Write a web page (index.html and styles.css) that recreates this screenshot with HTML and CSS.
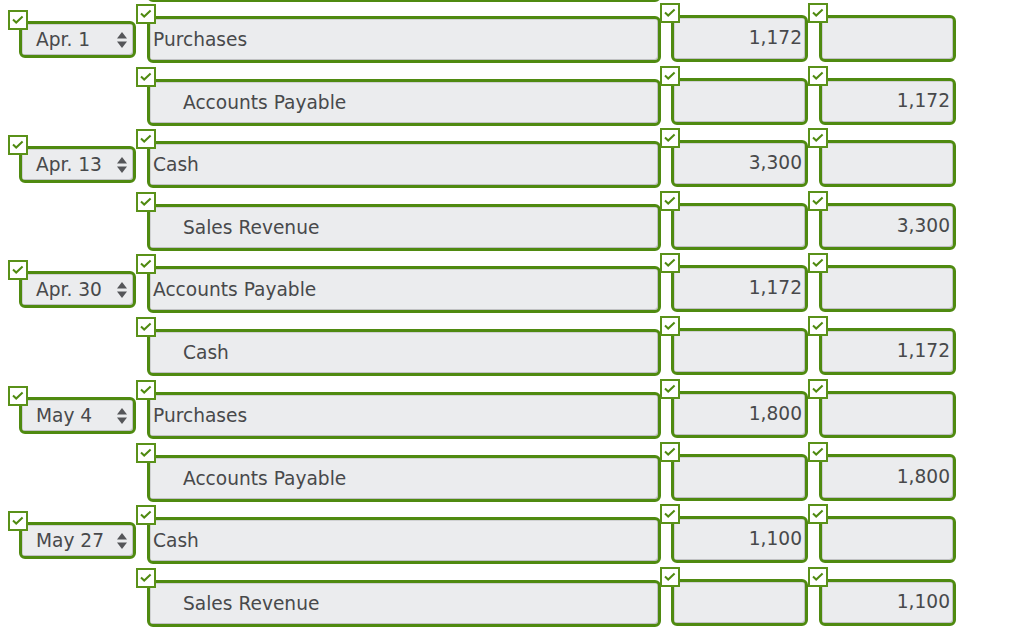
FILE: index.html
```html
<!DOCTYPE html>
<html lang="en">
<head>
<meta charset="utf-8">
<title>Journal entries</title>
<link rel="stylesheet" href="styles.css">
</head>
<body>
<div class="sheet">
  <div class="stub"><div class="field stub-field"></div></div>

  <div class="entry">
    <div class="row first">
      <div class="cell date">
        <span class="chk"><svg viewBox="0 0 16 16" width="16" height="16"><polyline points="3,7.6 6.2,10.6 12.6,4.6"/></svg></span>
        <div class="field select"><span class="val">Apr. 1</span><svg class="spin" viewBox="0 0 10 16" width="10" height="16"><polygon points="5,0 10,6.5 0,6.5"/><polygon points="0,9.5 10,9.5 5,16"/></svg></div>
      </div>
      <div class="cell acct">
        <span class="chk"><svg viewBox="0 0 16 16" width="16" height="16"><polyline points="3,7.6 6.2,10.6 12.6,4.6"/></svg></span>
        <div class="field"><span class="text">Purchases</span></div>
      </div>
      <div class="cell amt">
        <span class="chk"><svg viewBox="0 0 16 16" width="16" height="16"><polyline points="3,7.6 6.2,10.6 12.6,4.6"/></svg></span>
        <div class="field num"><span class="text">1,172</span></div>
      </div>
      <div class="cell amt credit">
        <span class="chk"><svg viewBox="0 0 16 16" width="16" height="16"><polyline points="3,7.6 6.2,10.6 12.6,4.6"/></svg></span>
        <div class="field num"></div>
      </div>
    </div>
    <div class="row second">
      <div class="cell date"></div>
      <div class="cell acct">
        <span class="chk"><svg viewBox="0 0 16 16" width="16" height="16"><polyline points="3,7.6 6.2,10.6 12.6,4.6"/></svg></span>
        <div class="field indent"><span class="text">Accounts Payable</span></div>
      </div>
      <div class="cell amt">
        <span class="chk"><svg viewBox="0 0 16 16" width="16" height="16"><polyline points="3,7.6 6.2,10.6 12.6,4.6"/></svg></span>
        <div class="field num"></div>
      </div>
      <div class="cell amt credit">
        <span class="chk"><svg viewBox="0 0 16 16" width="16" height="16"><polyline points="3,7.6 6.2,10.6 12.6,4.6"/></svg></span>
        <div class="field num"><span class="text">1,172</span></div>
      </div>
    </div>
  </div>

  <div class="entry">
    <div class="row first">
      <div class="cell date">
        <span class="chk"><svg viewBox="0 0 16 16" width="16" height="16"><polyline points="3,7.6 6.2,10.6 12.6,4.6"/></svg></span>
        <div class="field select"><span class="val">Apr. 13</span><svg class="spin" viewBox="0 0 10 16" width="10" height="16"><polygon points="5,0 10,6.5 0,6.5"/><polygon points="0,9.5 10,9.5 5,16"/></svg></div>
      </div>
      <div class="cell acct">
        <span class="chk"><svg viewBox="0 0 16 16" width="16" height="16"><polyline points="3,7.6 6.2,10.6 12.6,4.6"/></svg></span>
        <div class="field"><span class="text">Cash</span></div>
      </div>
      <div class="cell amt">
        <span class="chk"><svg viewBox="0 0 16 16" width="16" height="16"><polyline points="3,7.6 6.2,10.6 12.6,4.6"/></svg></span>
        <div class="field num"><span class="text">3,300</span></div>
      </div>
      <div class="cell amt credit">
        <span class="chk"><svg viewBox="0 0 16 16" width="16" height="16"><polyline points="3,7.6 6.2,10.6 12.6,4.6"/></svg></span>
        <div class="field num"></div>
      </div>
    </div>
    <div class="row second">
      <div class="cell date"></div>
      <div class="cell acct">
        <span class="chk"><svg viewBox="0 0 16 16" width="16" height="16"><polyline points="3,7.6 6.2,10.6 12.6,4.6"/></svg></span>
        <div class="field indent"><span class="text">Sales Revenue</span></div>
      </div>
      <div class="cell amt">
        <span class="chk"><svg viewBox="0 0 16 16" width="16" height="16"><polyline points="3,7.6 6.2,10.6 12.6,4.6"/></svg></span>
        <div class="field num"></div>
      </div>
      <div class="cell amt credit">
        <span class="chk"><svg viewBox="0 0 16 16" width="16" height="16"><polyline points="3,7.6 6.2,10.6 12.6,4.6"/></svg></span>
        <div class="field num"><span class="text">3,300</span></div>
      </div>
    </div>
  </div>

  <div class="entry tall">
    <div class="row first">
      <div class="cell date">
        <span class="chk"><svg viewBox="0 0 16 16" width="16" height="16"><polyline points="3,7.6 6.2,10.6 12.6,4.6"/></svg></span>
        <div class="field select"><span class="val">Apr. 30</span><svg class="spin" viewBox="0 0 10 16" width="10" height="16"><polygon points="5,0 10,6.5 0,6.5"/><polygon points="0,9.5 10,9.5 5,16"/></svg></div>
      </div>
      <div class="cell acct">
        <span class="chk"><svg viewBox="0 0 16 16" width="16" height="16"><polyline points="3,7.6 6.2,10.6 12.6,4.6"/></svg></span>
        <div class="field"><span class="text">Accounts Payable</span></div>
      </div>
      <div class="cell amt">
        <span class="chk"><svg viewBox="0 0 16 16" width="16" height="16"><polyline points="3,7.6 6.2,10.6 12.6,4.6"/></svg></span>
        <div class="field num"><span class="text">1,172</span></div>
      </div>
      <div class="cell amt credit">
        <span class="chk"><svg viewBox="0 0 16 16" width="16" height="16"><polyline points="3,7.6 6.2,10.6 12.6,4.6"/></svg></span>
        <div class="field num"></div>
      </div>
    </div>
    <div class="row second">
      <div class="cell date"></div>
      <div class="cell acct">
        <span class="chk"><svg viewBox="0 0 16 16" width="16" height="16"><polyline points="3,7.6 6.2,10.6 12.6,4.6"/></svg></span>
        <div class="field indent"><span class="text">Cash</span></div>
      </div>
      <div class="cell amt">
        <span class="chk"><svg viewBox="0 0 16 16" width="16" height="16"><polyline points="3,7.6 6.2,10.6 12.6,4.6"/></svg></span>
        <div class="field num"></div>
      </div>
      <div class="cell amt credit">
        <span class="chk"><svg viewBox="0 0 16 16" width="16" height="16"><polyline points="3,7.6 6.2,10.6 12.6,4.6"/></svg></span>
        <div class="field num"><span class="text">1,172</span></div>
      </div>
    </div>
  </div>

  <div class="entry">
    <div class="row first">
      <div class="cell date">
        <span class="chk"><svg viewBox="0 0 16 16" width="16" height="16"><polyline points="3,7.6 6.2,10.6 12.6,4.6"/></svg></span>
        <div class="field select"><span class="val">May 4</span><svg class="spin" viewBox="0 0 10 16" width="10" height="16"><polygon points="5,0 10,6.5 0,6.5"/><polygon points="0,9.5 10,9.5 5,16"/></svg></div>
      </div>
      <div class="cell acct">
        <span class="chk"><svg viewBox="0 0 16 16" width="16" height="16"><polyline points="3,7.6 6.2,10.6 12.6,4.6"/></svg></span>
        <div class="field"><span class="text">Purchases</span></div>
      </div>
      <div class="cell amt">
        <span class="chk"><svg viewBox="0 0 16 16" width="16" height="16"><polyline points="3,7.6 6.2,10.6 12.6,4.6"/></svg></span>
        <div class="field num"><span class="text">1,800</span></div>
      </div>
      <div class="cell amt credit">
        <span class="chk"><svg viewBox="0 0 16 16" width="16" height="16"><polyline points="3,7.6 6.2,10.6 12.6,4.6"/></svg></span>
        <div class="field num"></div>
      </div>
    </div>
    <div class="row second">
      <div class="cell date"></div>
      <div class="cell acct">
        <span class="chk"><svg viewBox="0 0 16 16" width="16" height="16"><polyline points="3,7.6 6.2,10.6 12.6,4.6"/></svg></span>
        <div class="field indent"><span class="text">Accounts Payable</span></div>
      </div>
      <div class="cell amt">
        <span class="chk"><svg viewBox="0 0 16 16" width="16" height="16"><polyline points="3,7.6 6.2,10.6 12.6,4.6"/></svg></span>
        <div class="field num"></div>
      </div>
      <div class="cell amt credit">
        <span class="chk"><svg viewBox="0 0 16 16" width="16" height="16"><polyline points="3,7.6 6.2,10.6 12.6,4.6"/></svg></span>
        <div class="field num"><span class="text">1,800</span></div>
      </div>
    </div>
  </div>

  <div class="entry">
    <div class="row first">
      <div class="cell date">
        <span class="chk"><svg viewBox="0 0 16 16" width="16" height="16"><polyline points="3,7.6 6.2,10.6 12.6,4.6"/></svg></span>
        <div class="field select"><span class="val">May 27</span><svg class="spin" viewBox="0 0 10 16" width="10" height="16"><polygon points="5,0 10,6.5 0,6.5"/><polygon points="0,9.5 10,9.5 5,16"/></svg></div>
      </div>
      <div class="cell acct">
        <span class="chk"><svg viewBox="0 0 16 16" width="16" height="16"><polyline points="3,7.6 6.2,10.6 12.6,4.6"/></svg></span>
        <div class="field"><span class="text">Cash</span></div>
      </div>
      <div class="cell amt">
        <span class="chk"><svg viewBox="0 0 16 16" width="16" height="16"><polyline points="3,7.6 6.2,10.6 12.6,4.6"/></svg></span>
        <div class="field num"><span class="text">1,100</span></div>
      </div>
      <div class="cell amt credit">
        <span class="chk"><svg viewBox="0 0 16 16" width="16" height="16"><polyline points="3,7.6 6.2,10.6 12.6,4.6"/></svg></span>
        <div class="field num"></div>
      </div>
    </div>
    <div class="row second">
      <div class="cell date"></div>
      <div class="cell acct">
        <span class="chk"><svg viewBox="0 0 16 16" width="16" height="16"><polyline points="3,7.6 6.2,10.6 12.6,4.6"/></svg></span>
        <div class="field indent"><span class="text">Sales Revenue</span></div>
      </div>
      <div class="cell amt">
        <span class="chk"><svg viewBox="0 0 16 16" width="16" height="16"><polyline points="3,7.6 6.2,10.6 12.6,4.6"/></svg></span>
        <div class="field num"></div>
      </div>
      <div class="cell amt credit">
        <span class="chk"><svg viewBox="0 0 16 16" width="16" height="16"><polyline points="3,7.6 6.2,10.6 12.6,4.6"/></svg></span>
        <div class="field num"><span class="text">1,100</span></div>
      </div>
    </div>
  </div>
</div>
</body>
</html>
```

FILE: styles.css
```css
* {
  box-sizing: border-box;
}

html, body {
  margin: 0;
  padding: 0;
  background: #ffffff;
}

body {
  font-family: "DejaVu Sans", Verdana, sans-serif;
  font-size: 18.6px;
  color: #48494b;
  overflow: hidden;
}

.sheet {
  display: flex;
  flex-direction: column;
}

/* bottom edge of the previous (scrolled-off) row */
.stub {
  height: 2px;
  margin-bottom: 2px;
  padding-left: 147px;
  display: flex;
  align-items: flex-end;
  overflow: hidden;
}

.stub-field {
  width: 514px;
  height: 47px;
  flex: none;
}

.entry {
  display: flex;
  flex-direction: column;
}

.row {
  display: flex;
  align-items: flex-start;
  height: 63px;
  padding-left: 19px;
}

.row.second {
  height: 62px;
}

.entry.tall .row.second {
  height: 63px;
}

.cell {
  position: relative;
  flex: none;
}

.cell.date {
  width: 117px;
  margin-top: 17px;
}

.cell.acct {
  width: 514px;
  margin-left: 11px;
  margin-top: 12px;
}

.cell.amt {
  width: 137px;
  margin-left: 10px;
  margin-top: 11px;
}

.cell.amt.credit {
  margin-left: 11px;
}

.field {
  height: 47px;
  border: 3px solid #4f8a10;
  border-radius: 6px;
  background: #ebecee;
  box-shadow: inset -1px -1px 0 #c0c1c3, inset 1px 1px 0 #d0d1d3;
  display: flex;
  align-items: center;
  padding: 0 2px 0 3px;
  white-space: nowrap;
}

.field.indent {
  padding-left: 33px;
}

.field.num {
  justify-content: flex-end;
  padding-right: 3px;
  padding-bottom: 3px;
}

.field.select {
  height: 37px;
  padding-left: 14px;
  padding-right: 6px;
  justify-content: space-between;
}

.spin {
  display: block;
  fill: #555659;
}

.chk {
  position: absolute;
  top: -12px;
  left: -11px;
  width: 20px;
  height: 20px;
  border: 2px solid #5a9119;
  background: #ffffff;
  z-index: 2;
  display: block;
}

.cell.date .chk {
  top: -11px;
}

.chk svg {
  display: block;
  fill: none;
  stroke: #4f8a10;
  stroke-width: 2;
  stroke-linecap: butt;
  stroke-linejoin: miter;
}
```
